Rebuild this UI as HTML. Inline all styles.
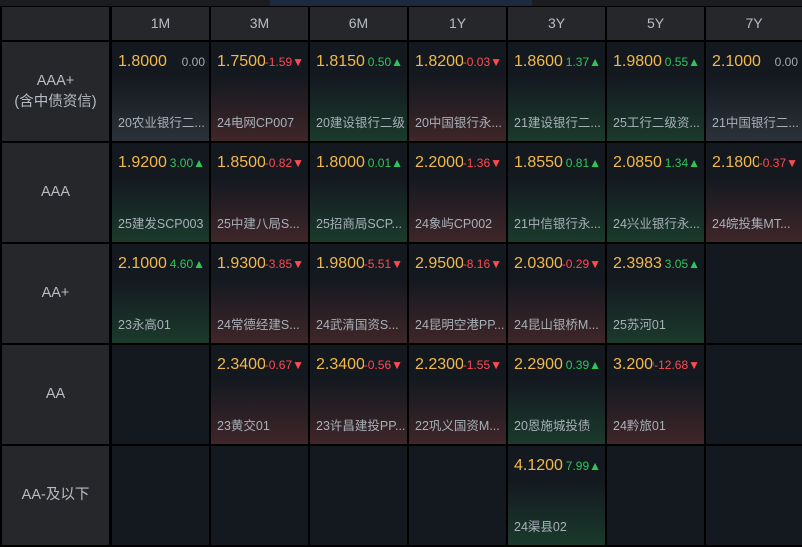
<!DOCTYPE html><html><head><meta charset="utf-8"><style>
body{margin:0;width:802px;height:547px;background:#000;position:relative;overflow:hidden;font-family:"Liberation Sans","Noto Sans CJK SC",sans-serif}
.top{position:absolute;left:0;top:0;width:802px;height:6px;background:#1a1c20}
.top i{position:absolute;left:270px;width:262px;top:0;height:6px;background:#1b2a3e}
.c{position:absolute;box-sizing:border-box}
.h{background:#25272b;color:#b8bcc2;font-size:14px;text-align:center;line-height:33px;top:7px;height:33px}
.l{background:#25272b;color:#b8bcc2;font-size:14.5px;display:flex;align-items:center;justify-content:center;text-align:center;line-height:21px;left:2px;width:107px;height:99px}
.e{background:#141920;width:97px;height:99px}
.g{background:linear-gradient(#141920 35%,#1b3a2c)}
.r{background:linear-gradient(#141920 35%,#3f2629)}
.n{background:linear-gradient(#141920 35%,#2c3239)}
.t{position:absolute;left:6px;right:4px;top:11px;display:flex;align-items:baseline;white-space:nowrap}
.v{color:#f2b84a;font-size:16px;overflow:hidden;flex:0 1 auto;min-width:0}
.d{font-size:12px;flex:none;margin-left:auto}
.up{color:#2ec55a}.dn{color:#ff4a50}.z{color:#a0a8b0}
.nm{position:absolute;left:6px;top:70px;font-size:12.5px;color:#a8b0b8;white-space:nowrap}
</style></head><body>
<div class="top"><i></i></div>
<div class="c h" style="left:2px;width:107px"></div>
<div class="c h" style="left:112px;width:97px">1M</div>
<div class="c h" style="left:211px;width:97px">3M</div>
<div class="c h" style="left:310px;width:97px">6M</div>
<div class="c h" style="left:409px;width:97px">1Y</div>
<div class="c h" style="left:508px;width:97px">3Y</div>
<div class="c h" style="left:607px;width:97px">5Y</div>
<div class="c h" style="left:706px;width:96px">7Y</div>

<div class="c l" style="top:42px">AAA+<br>(含中债资信)</div>
<div class="c l" style="top:143px">AAA</div>
<div class="c l" style="top:244px">AA+</div>
<div class="c l" style="top:345px">AA</div>
<div class="c l" style="top:446px">AA-及以下</div>

<div class="c e n" style="left:112px;top:42px"><div class="t"><span class="v">1.8000</span><span class="d z">0.00</span></div><div class="nm">20农业银行二...</div></div>
<div class="c e r" style="left:211px;top:42px"><div class="t"><span class="v">1.7500</span><span class="d dn">-1.59▼</span></div><div class="nm">24电网CP007</div></div>
<div class="c e g" style="left:310px;top:42px"><div class="t"><span class="v">1.8150</span><span class="d up">0.50▲</span></div><div class="nm">20建设银行二级</div></div>
<div class="c e r" style="left:409px;top:42px"><div class="t"><span class="v">1.8200</span><span class="d dn">-0.03▼</span></div><div class="nm">20中国银行永...</div></div>
<div class="c e g" style="left:508px;top:42px"><div class="t"><span class="v">1.8600</span><span class="d up">1.37▲</span></div><div class="nm">21建设银行二...</div></div>
<div class="c e g" style="left:607px;top:42px"><div class="t"><span class="v">1.9800</span><span class="d up">0.55▲</span></div><div class="nm">25工行二级资...</div></div>
<div class="c e n" style="left:706px;top:42px;width:96px"><div class="t"><span class="v">2.1000</span><span class="d z">0.00</span></div><div class="nm">21中国银行二...</div></div>

<div class="c e g" style="left:112px;top:143px"><div class="t"><span class="v">1.9200</span><span class="d up">3.00▲</span></div><div class="nm">25建发SCP003</div></div>
<div class="c e r" style="left:211px;top:143px"><div class="t"><span class="v">1.8500</span><span class="d dn">-0.82▼</span></div><div class="nm">25中建八局S...</div></div>
<div class="c e g" style="left:310px;top:143px"><div class="t"><span class="v">1.8000</span><span class="d up">0.01▲</span></div><div class="nm">25招商局SCP...</div></div>
<div class="c e r" style="left:409px;top:143px"><div class="t"><span class="v">2.2000</span><span class="d dn">-1.36▼</span></div><div class="nm">24象屿CP002</div></div>
<div class="c e g" style="left:508px;top:143px"><div class="t"><span class="v">1.8550</span><span class="d up">0.81▲</span></div><div class="nm">21中信银行永...</div></div>
<div class="c e g" style="left:607px;top:143px"><div class="t"><span class="v">2.0850</span><span class="d up">1.34▲</span></div><div class="nm">24兴业银行永...</div></div>
<div class="c e r" style="left:706px;top:143px;width:96px"><div class="t"><span class="v">2.1800</span><span class="d dn">-0.37▼</span></div><div class="nm">24皖投集MT...</div></div>

<div class="c e g" style="left:112px;top:244px"><div class="t"><span class="v">2.1000</span><span class="d up">4.60▲</span></div><div class="nm">23永高01</div></div>
<div class="c e r" style="left:211px;top:244px"><div class="t"><span class="v">1.9300</span><span class="d dn">-3.85▼</span></div><div class="nm">24常德经建S...</div></div>
<div class="c e r" style="left:310px;top:244px"><div class="t"><span class="v">1.9800</span><span class="d dn">-5.51▼</span></div><div class="nm">24武清国资S...</div></div>
<div class="c e r" style="left:409px;top:244px"><div class="t"><span class="v">2.9500</span><span class="d dn">-8.16▼</span></div><div class="nm">24昆明空港PP...</div></div>
<div class="c e r" style="left:508px;top:244px"><div class="t"><span class="v">2.0300</span><span class="d dn">-0.29▼</span></div><div class="nm">24昆山银桥M...</div></div>
<div class="c e g" style="left:607px;top:244px"><div class="t"><span class="v">2.3983</span><span class="d up">3.05▲</span></div><div class="nm">25苏河01</div></div>
<div class="c e" style="left:706px;top:244px;width:96px"></div>

<div class="c e" style="left:112px;top:345px"></div>
<div class="c e r" style="left:211px;top:345px"><div class="t"><span class="v">2.3400</span><span class="d dn">-0.67▼</span></div><div class="nm">23黄交01</div></div>
<div class="c e r" style="left:310px;top:345px"><div class="t"><span class="v">2.3400</span><span class="d dn">-0.56▼</span></div><div class="nm">23许昌建投PP...</div></div>
<div class="c e r" style="left:409px;top:345px"><div class="t"><span class="v">2.2300</span><span class="d dn">-1.55▼</span></div><div class="nm">22巩义国资M...</div></div>
<div class="c e g" style="left:508px;top:345px"><div class="t"><span class="v">2.2900</span><span class="d up">0.39▲</span></div><div class="nm">20恩施城投债</div></div>
<div class="c e r" style="left:607px;top:345px"><div class="t"><span class="v">3.2000</span><span class="d dn">-12.68▼</span></div><div class="nm">24黔旅01</div></div>
<div class="c e" style="left:706px;top:345px;width:96px"></div>

<div class="c e" style="left:112px;top:446px"></div>
<div class="c e" style="left:211px;top:446px"></div>
<div class="c e" style="left:310px;top:446px"></div>
<div class="c e" style="left:409px;top:446px"></div>
<div class="c e g" style="left:508px;top:446px"><div class="t"><span class="v">4.1200</span><span class="d up">7.99▲</span></div><div class="nm">24渠县02</div></div>
<div class="c e" style="left:607px;top:446px"></div>
<div class="c e" style="left:706px;top:446px;width:96px"></div>
</body></html>
